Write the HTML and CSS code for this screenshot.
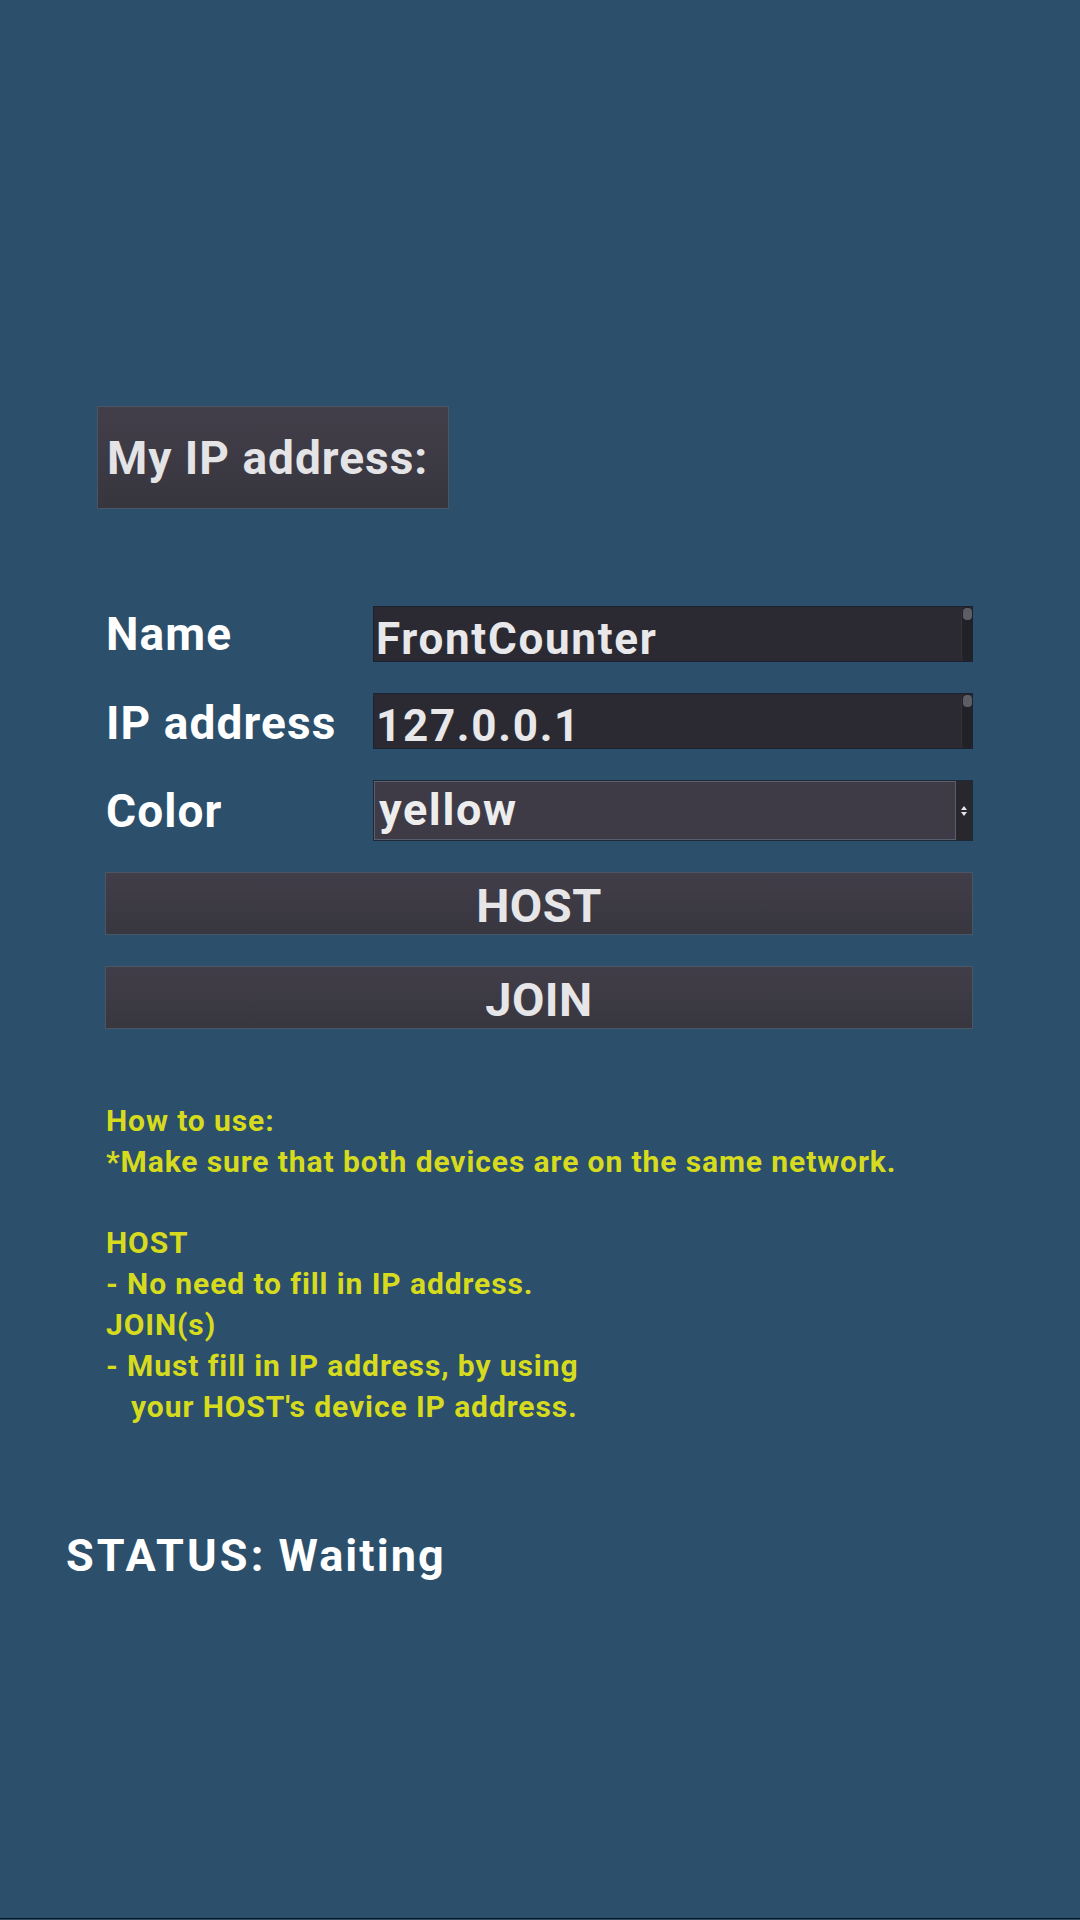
FILE: index.html
```html
<!DOCTYPE html>
<html lang="en">
<head>
<meta charset="utf-8">
<title>Connect</title>
<link rel="stylesheet" href="styles.css">
</head>
<body>
<main class="screen">
  <div class="ip-box">My IP address:</div>

  <section class="form">
    <div class="row">
      <div class="label">Name</div>
      <div class="field">
        <span class="field-text">FrontCounter</span>
        <span class="scroll"><span class="thumb"></span></span>
      </div>
    </div>
    <div class="row">
      <div class="label">IP address</div>
      <div class="field">
        <span class="field-text">127.0.0.1</span>
        <span class="scroll"><span class="thumb"></span></span>
      </div>
    </div>
    <div class="row">
      <div class="label">Color</div>
      <div class="select">
        <span class="select-face">yellow</span>
        <span class="select-arrow">
          <svg width="8" height="12" viewBox="0 0 8 12"><path d="M4 1 L7 5 L1 5 Z M4 11 L7 7 L1 7 Z" fill="#e6e6e6"/></svg>
        </span>
      </div>
    </div>
    <div class="btn">HOST</div>
    <div class="btn">JOIN</div>
  </section>

  <section class="help">How to use:
*Make sure that both devices are on the same network.

HOST
- No need to fill in IP address.
JOIN(s)
- Must fill in IP address, by using
   your HOST's device IP address.</section>

  <div class="status"><span class="status-key">STATUS:</span><span class="status-val">Waiting</span></div>
</main>
</body>
</html>
```

FILE: styles.css
```css
html, body {
  margin: 0;
  padding: 0;
}
body {
  background: #2c4f6b;
  font-family: Roboto, "Liberation Sans", sans-serif;
  width: 1080px;
  height: 1920px;
  overflow: hidden;
}
.screen {
  position: relative;
  height: 1919px;
  border-bottom: 1px solid #0a1420;
  padding-top: 406px;
  box-sizing: border-box;
  display: flex;
  flex-direction: column;
}
.ip-box {
  margin-left: 97px;
  width: 352px;
  height: 103px;
  box-sizing: border-box;
  border: 1px solid #4a5666;
  background: linear-gradient(#423f4a, #37353e);
  color: #e4e4e6;
  font-weight: 700;
  font-size: 46px;
  letter-spacing: 1px;
  display: flex;
  align-items: center;
  padding-left: 9px;
  padding-top: 1px;
}
.form {
  margin-top: 97px;
  margin-left: 105px;
  width: 868px;
  display: flex;
  flex-direction: column;
  gap: 31px;
}
.row {
  display: flex;
  align-items: center;
}
.label {
  width: 268px;
  flex: none;
  color: #ffffff;
  font-weight: 700;
  font-size: 46px;
  letter-spacing: 1.1px;
  padding-left: 1px;
  box-sizing: border-box;
  line-height: 1;
}
.row:nth-child(2) .label { padding-top: 4px; }
.field {
  width: 600px;
  height: 56px;
  box-sizing: border-box;
  background: #2b2a32;
  border: 1px solid #1d2230;
  display: flex;
  align-items: center;
  position: relative;
}
.field-text {
  flex: 1;
  color: #e8e8ea;
  font-weight: 700;
  font-size: 44px;
  letter-spacing: 1.7px;
  padding-left: 2px;
  padding-top: 9px;
  line-height: 1;
}
.scroll {
  width: 11px;
  align-self: stretch;
  background: #222127;
  border-left: 1px solid #34333a;
  border-radius: 4px;
  box-sizing: border-box;
  display: flex;
  justify-content: center;
  padding-top: 1px;
}
.thumb {
  width: 9px;
  height: 12px;
  border-radius: 4px;
  background: #5e5d66;
}
.select {
  width: 600px;
  height: 61px;
  box-sizing: border-box;
  background: #28272e;
  border: 1px solid #1e2a38;
  display: flex;
}
.select-face {
  flex: 1;
  background: #3e3b46;
  border: 1px solid #56606e;
  color: #ededee;
  font-weight: 700;
  font-size: 45px;
  letter-spacing: 1.6px;
  display: flex;
  align-items: center;
  padding-left: 4px;
  padding-bottom: 2px;
  line-height: 1;
}
.select-arrow {
  width: 16px;
  display: flex;
  align-items: center;
  justify-content: center;
}
.btn {
  height: 63px;
  box-sizing: border-box;
  border: 1px solid #4a5666;
  background: linear-gradient(#413e49, #38363f);
  color: #e6e6e8;
  font-weight: 700;
  font-size: 47px;
  letter-spacing: 0.5px;
  display: flex;
  align-items: center;
  justify-content: center;
  line-height: 1;
  padding-top: 3px;
}
.help {
  margin-top: 72px;
  margin-left: 106px;
  white-space: pre;
  color: #d7db1e;
  font-weight: 700;
  font-size: 30px;
  letter-spacing: 0.9px;
  line-height: 40.8px;
}
.status {
  margin-top: 103px;
  margin-left: 66px;
  color: #ffffff;
  font-weight: 700;
  font-size: 45px;
  line-height: 52px;
  display: flex;
  gap: 12px;
}
.status-key { letter-spacing: 3.1px; }
.status-val { letter-spacing: 2.1px; }
```
